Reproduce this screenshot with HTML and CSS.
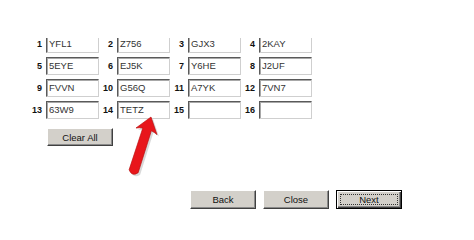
FILE: index.html
```html
<!DOCTYPE html>
<html>
<head>
<meta charset="utf-8">
<link rel="stylesheet" href="styles.css">
</head>
<body>
<div class="clip">
  <div class="grid">
    <div class="cell"><span class="num">1</span><span class="box">YFL1</span></div>
    <div class="cell"><span class="num">2</span><span class="box">Z756</span></div>
    <div class="cell"><span class="num">3</span><span class="box">GJX3</span></div>
    <div class="cell"><span class="num">4</span><span class="box">2KAY</span></div>
    <div class="cell"><span class="num">5</span><span class="box">5EYE</span></div>
    <div class="cell"><span class="num">6</span><span class="box">EJ5K</span></div>
    <div class="cell"><span class="num">7</span><span class="box">Y6HE</span></div>
    <div class="cell"><span class="num">8</span><span class="box">J2UF</span></div>
    <div class="cell"><span class="num">9</span><span class="box">FVVN</span></div>
    <div class="cell"><span class="num">10</span><span class="box">G56Q</span></div>
    <div class="cell"><span class="num">11</span><span class="box">A7YK</span></div>
    <div class="cell"><span class="num">12</span><span class="box">7VN7</span></div>
    <div class="cell"><span class="num">13</span><span class="box">63W9</span></div>
    <div class="cell"><span class="num">14</span><span class="box">TETZ</span></div>
    <div class="cell"><span class="num">15</span><span class="box"></span></div>
    <div class="cell"><span class="num">16</span><span class="box"></span></div>
  </div>
</div>
<div class="clear-row"><button class="btn">Clear All</button></div>
<div class="nav">
  <button class="btn">Back</button>
  <button class="btn">Close</button>
  <button class="btn default"><span class="focus">Next</span></button>
</div>
<svg class="arrow" width="474" height="220" viewBox="0 0 474 220">
  <g transform="translate(153 119) rotate(17.5)">
    <path d="M0 0 L11 15 Q8 13.5 4.5 13 L4.5 57 Q0 63 -5 57 L-4.5 13 Q-8 13.5 -11 15 Z" fill="rgba(0,0,0,0.15)"/>
  </g>
  <g transform="translate(151 117) rotate(17.5)">
    <path d="M0 0 L11 15 Q8 13.5 4.5 13 L4.5 57 Q0 63 -5 57 L-4.5 13 Q-8 13.5 -11 15 Z" fill="#e8161b" stroke="#b80f0f" stroke-width="0.6"/>
  </g>
</svg>
</body>
</html>
```

FILE: styles.css
```css
html, body {
  margin: 0;
  padding: 0;
  background: #ffffff;
}
body {
  position: relative;
  width: 474px;
  height: 220px;
  overflow: hidden;
  font-family: "Liberation Sans", Arial, sans-serif;
}
.clip {
  margin-top: 38px;
  overflow: hidden;
}
.grid {
  margin-top: -3px;
  margin-left: 28px;
  display: grid;
  grid-template-columns: repeat(4, 71px);
  row-gap: 4px;
}
.cell {
  display: flex;
  align-items: center;
  height: 18px;
}
.num {
  width: 14px;
  margin-right: 4px;
  text-align: right;
  font-weight: bold;
  font-size: 9px;
  color: #111;
}
.box {
  box-sizing: border-box;
  width: 53px;
  height: 18px;
  border: 1px solid;
  border-color: #5a5a5a #cfcfcf #cfcfcf #5a5a5a;
  box-shadow: inset 1px 1px #a8a8a8;
  background: #fff;
  padding-left: 2px;
  font-size: 9.5px;
  line-height: 16px;
  color: #333;
}
.clear-row {
  margin-top: 9px;
  margin-left: 47px;
}
.nav {
  margin-top: 44px;
  margin-left: 190px;
  display: flex;
  gap: 7px;
}
.btn {
  box-sizing: border-box;
  width: 66px;
  height: 19px;
  margin: 0;
  padding: 0;
  background: #d3d0ca;
  border: 1px solid;
  border-color: #ffffff #404040 #404040 #ffffff;
  box-shadow: inset -1px -1px #8a8a8a;
  font-family: "Liberation Sans", Arial, sans-serif;
  font-size: 9.5px;
  color: #111;
  display: flex;
  align-items: center;
  justify-content: center;
}
.clear-row .btn {
  height: 18px;
}
.btn.default {
  border: 1px solid #000;
  box-shadow: inset 1px 1px #fff, inset -1px -1px #404040, inset -2px -2px #8a8a8a;
}
.focus {
  box-sizing: border-box;
  align-self: stretch;
  flex: 1;
  margin: 3px;
  border: 1px dotted #333;
  display: flex;
  align-items: center;
  justify-content: center;
}
.arrow {
  position: absolute;
  left: 0;
  top: 0;
  pointer-events: none;
}
```
